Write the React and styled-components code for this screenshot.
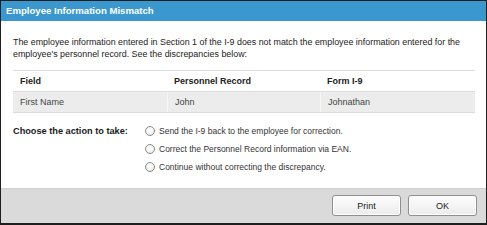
import React from "react";
import styled, { createGlobalStyle } from "styled-components";

const Global = createGlobalStyle`
  html, body { margin: 0; padding: 0; background: #fff; }
  body { font-family: "Liberation Sans", Arial, sans-serif; }
  * { box-sizing: border-box; }
`;

const Dialog = styled.div`
  width: 487px;
  height: 225px;
  border: 1px solid #1e1e1e;
  border-bottom-width: 2px;
  display: flex;
  flex-direction: column;
  background: #fff;
  font-family: "Liberation Sans", Arial, sans-serif;
`;

const TitleBar = styled.div`
  height: 20px;
  background: #3a98cf;
  color: #fff;
  font-weight: bold;
  font-size: 9.6px;
  line-height: 20px;
  padding-left: 5px;
  flex: none;
`;

const Body = styled.div`
  flex: 1;
  padding: 15px 10px 0 12px;
`;

const Intro = styled.p`
  margin: 0;
  font-size: 8.9px;
  line-height: 12px;
  color: #222;
`;

const Table = styled.div`
  margin-top: 10px;
  width: 462px;
  border-top: 1px solid #dcdcdc;
`;

const Row = styled.div`
  display: grid;
  grid-template-columns: 154px 153px 155px;
  height: 21px;
  border-bottom: 1px solid #dcdcdc;
  background: ${(p) => (p.$shaded ? "#ececec" : "#fff")};
`;

const Cell = styled.div`
  padding-left: 7px;
  font-size: 9px;
  line-height: 20px;
  color: ${(p) => (p.$head ? "#222" : "#444")};
  font-weight: ${(p) => (p.$head ? "bold" : "normal")};
  border-left: ${(p) => (p.$sep ? "1px solid #f6f6f6" : "none")};
`;

const Actions = styled.div`
  margin-top: 9px;
  display: flex;
  align-items: flex-start;
`;

const ActionLabel = styled.div`
  font-size: 9.2px;
  font-weight: bold;
  line-height: 18px;
  color: #1a1a1a;
  width: 132px;
  white-space: nowrap;
`;

const Options = styled.div`
  display: flex;
  flex-direction: column;
`;

const Option = styled.label`
  display: flex;
  align-items: center;
  height: 18px;
  font-size: 8.5px;
  color: #333;
  gap: 4px;
`;

const Radio = styled.span`
  width: 10px;
  height: 10px;
  border-radius: 50%;
  border: 1px solid #8a8a8a;
  background: radial-gradient(circle at 50% 40%, #fff 0%, #f2f2f2 60%, #dcdcdc 100%);
  flex: none;
`;

const Footer = styled.div`
  flex: none;
  height: 35px;
  background: #dadada;
  border-top: 1px solid #cfcfcf;
  display: flex;
  justify-content: flex-end;
  align-items: flex-start;
  gap: 7px;
  padding: 6px 9px 0 0;
`;

const Button = styled.button`
  width: ${(p) => p.$w}px;
  height: 21px;
  border: 1px solid #8f8f8f;
  border-radius: 3px;
  background: linear-gradient(#fdfdfd, #ececec);
  box-shadow: inset 0 0 0 1px #fff;
  font-family: "Liberation Sans", Arial, sans-serif;
  font-size: 9px;
  color: #222;
  padding: 0;
`;

export default function App() {
  return (
    <>
      <Global />
      <Dialog>
        <TitleBar>Employee Information Mismatch</TitleBar>
        <Body>
          <Intro>
            The employee information entered in Section 1 of the I-9 does not match the employee information entered for
            the employee's personnel record. See the discrepancies below:
          </Intro>
          <Table>
            <Row>
              <Cell $head>Field</Cell>
              <Cell $head>Personnel Record</Cell>
              <Cell $head>Form I-9</Cell>
            </Row>
            <Row $shaded>
              <Cell>First Name</Cell>
              <Cell $sep>John</Cell>
              <Cell $sep>Johnathan</Cell>
            </Row>
          </Table>
          <Actions>
            <ActionLabel>Choose the action to take:</ActionLabel>
            <Options>
              <Option><Radio />Send the I-9 back to the employee for correction.</Option>
              <Option><Radio />Correct the Personnel Record information via EAN.</Option>
              <Option><Radio />Continue without correcting the discrepancy.</Option>
            </Options>
          </Actions>
        </Body>
        <Footer>
          <Button $w={69}>Print</Button>
          <Button $w={69}>OK</Button>
        </Footer>
      </Dialog>
    </>
  );
}
